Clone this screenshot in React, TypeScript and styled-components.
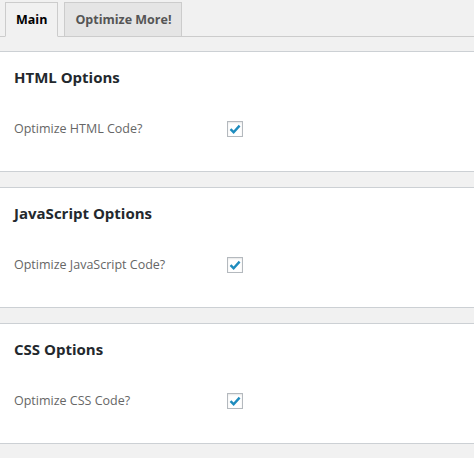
import { FC } from "react";
import styled, { createGlobalStyle } from "styled-components";

const GlobalStyle = createGlobalStyle`
    body {
        margin: 0;
        background: #f1f1f1;
        font-family: "Open Sans", "Noto Sans", sans-serif;
        color: #23282d;
    }
`

const sections = [
    { title: "HTML Options", label: "Optimize HTML Code?" },
    { title: "JavaScript Options", label: "Optimize JavaScript Code?" },
    { title: "CSS Options", label: "Optimize CSS Code?" },
]

const Check: FC = () => (
    <CheckBox>
        <svg width="12" height="12" viewBox="0 0 12 12">
            <path d="M1.5 6.2 L4.6 9.2 L10.6 2.6" fill="none" stroke="#1e8cbe" strokeWidth="2.4" strokeLinejoin="miter" />
        </svg>
    </CheckBox>
)

const App: FC = () => {
    return (
        <Page>
            <GlobalStyle />
            <Nav>
                <Tab $active>Main</Tab>
                <Tab>Optimize More!</Tab>
            </Nav>
            <Sections>
                {sections.map(s => (
                    <Card key={s.title}>
                        <Title>{s.title}</Title>
                        <Row>
                            <Label>{s.label}</Label>
                            <Check />
                        </Row>
                    </Card>
                ))}
            </Sections>
        </Page>
    )
}

export default App


const Page = styled.div`
    min-height: 458px;
`

const Nav = styled.div`
    display: flex;
    gap: 6px;
    padding: 2px 0 0 5px;
    border-bottom: 1px solid #ccc;
`

const Tab = styled.div<{$active?: boolean}>`
    padding: 5px 10px;
    line-height: 23px;
    font-size: 12.5px;
    font-weight: 700;
    border: 1px solid #ccc;
    border-bottom: ${p => p.$active ? "1px solid #f1f1f1" : "none"};
    margin-bottom: ${p => p.$active ? "-1px" : "0"};
    background: ${p => p.$active ? "#f1f1f1" : "#e5e5e5"};
    color: ${p => p.$active ? "#000" : "#555"};
`

const Sections = styled.div`
    display: flex;
    flex-direction: column;
    gap: 15px;
    margin-top: 14px;
`

const Card = styled.div`
    height: 119px;
    box-sizing: content-box;
    background: #fff;
    border-top: 1px solid #ccd0d4;
    border-bottom: 1px solid #ccd0d4;
    padding: 0 14px;
`

const Title = styled.h2`
    margin: 15px 0 0;
    font-size: 15px;
    line-height: 20px;
    font-weight: 700;
    color: #23282d;
`

const Row = styled.div`
    display: grid;
    grid-template-columns: 213px auto;
    align-items: center;
    margin-top: 32px;
`

const Label = styled.div`
    font-size: 12.5px;
    line-height: 20px;
    color: #666;
`

const CheckBox = styled.div`
    width: 14px;
    height: 14px;
    border: 1px solid #b4b9be;
    background: #fff;
    box-shadow: inset 0 1px 2px rgba(0,0,0,0.1);
    display: flex;
    align-items: center;
    justify-content: center;
`
